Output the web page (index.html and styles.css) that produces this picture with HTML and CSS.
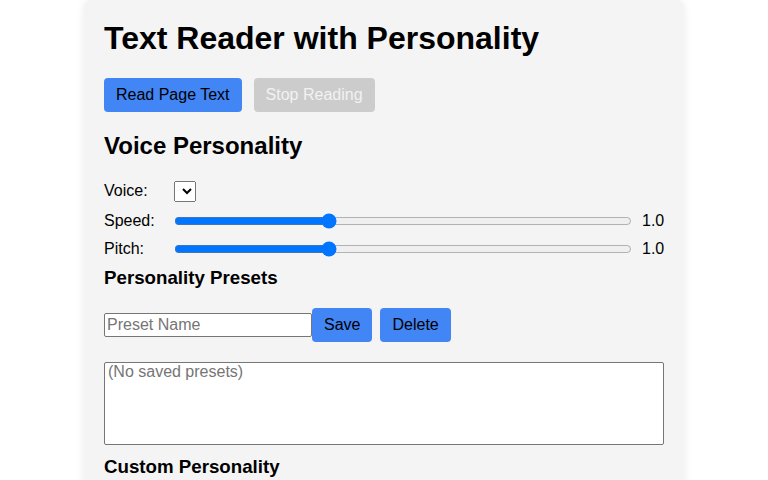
FILE: index.html
```html
<!DOCTYPE html>
<html lang="en">
<head>
  <meta charset="UTF-8">
  <meta content="width=device-width, initial-scale=1.0" name="viewport">
  <title>Text Reader with Personality</title>
  <link rel="stylesheet" href="styles.css">
</head>
<body>
<div class="reader-card">

  <h1>Text Reader with Personality</h1>

  <!-- read / stop controls -->
  <div class="read-controls">
    <button class="btn" type="button">Read Page Text</button>
    <button class="btn" type="button" disabled>Stop Reading</button>
  </div>

  <h2>Voice Personality</h2>

  <div class="voice-row voice-select-row">
    <label for="voice">Voice:</label>
    <select id="voice"></select>
  </div>
  <div class="voice-row">
    <label for="speed">Speed:</label>
    <input id="speed" class="slider" type="range" min="0.5" max="2" step="0.1" value="1">
    <span class="slider-value">1.0</span>
  </div>
  <div class="voice-row">
    <label for="pitch">Pitch:</label>
    <input id="pitch" class="slider" type="range" min="0.5" max="2" step="0.1" value="1">
    <span class="slider-value">1.0</span>
  </div>

  <!-- presets -->
  <h3 class="presets-title">Personality Presets</h3>
  <div class="preset-controls">
    <input class="preset-name" type="text" placeholder="Preset Name">
    <button class="btn" type="button">Save</button>
    <button class="btn delete-btn" type="button">Delete</button>
  </div>
  <div class="preset-list">(No saved presets)</div>

  <h3 class="custom-title">Custom Personality</h3>
</div>
</body>
</html>
```

FILE: styles.css
```css
body{
  margin: 0;
  background-color: #fff;
  font-family: "Liberation Sans", Arial, sans-serif;
  color: #000;
}

.reader-card{
  width: 600px;
  box-sizing: border-box;
  margin: 0 auto;
  padding: 20px;
  background-color: #f4f4f4;
  border-radius: 8px;
  box-shadow: 0 0 10px rgba(0, 0, 0, 0.08);
  min-height: 500px;
}

h1{
  font-size: 32px;
  margin: 0 0 21px 0;
  line-height: 37px;
}

h2{
  font-size: 24px;
  margin: 20px 0;
  line-height: 28px;
}

h3{
  font-size: 18.72px;
  line-height: 22px;
}

.read-controls{
  display: flex;
  gap: 12px;
}

/* blue buttons */
.btn{
  background-color: #4285f4;
  color: #000;
  border: none;
  border-radius: 4px;
  padding: 8px 12px;
  font-family: "Liberation Sans", Arial, sans-serif;
  font-size: 16px;
  line-height: 18px;
}

.btn:disabled{
  background-color: #cccccc;
  color: #f2f2f2;
}

.voice-row{
  display: flex;
  align-items: center;
  height: 20px;
  margin-bottom: 8px;
  font-size: 16px;
}

.voice-select-row{
  height: 22px;
  margin-top: 1px;
  margin-bottom: 9px;
}

.voice-row label{
  width: 70px;
}

#voice{
  width: 22px;
  height: 21px;
}

.slider{
  flex: 1;
  margin: 0;
}

.slider-value{
  margin-left: 10px;
  width: 22px;
}

.presets-title{
  margin: 3px 0 19px 0;
}

.preset-controls{
  display: flex;
  align-items: center;
}

.preset-name{
  width: 208px;
  height: 24px;
  box-sizing: border-box;
  font-family: "Liberation Sans", Arial, sans-serif;
  font-size: 16px;
  padding: 1px 2px;
  border: 1px solid #767676;
  border-radius: 2px;
  background: #fff;
}

.delete-btn{
  margin-left: 8px;
}

.preset-list{
  margin-top: 20px;
  height: 83px;
  box-sizing: border-box;
  border: 1px solid #767676;
  border-radius: 2px;
  background-color: #fff;
  padding: 0 3px;
  font-size: 16px;
  line-height: 18px;
  color: #757575;
}

.custom-title{
  margin: 11px 0 0 0;
}
```
